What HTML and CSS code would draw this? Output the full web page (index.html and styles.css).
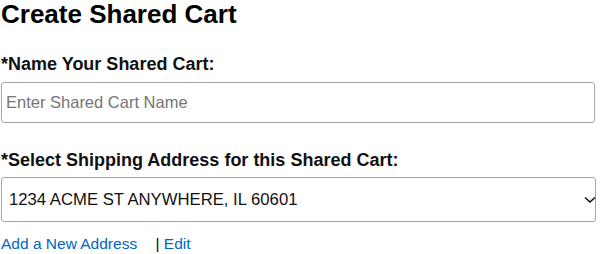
FILE: index.html
```html
<!DOCTYPE html>
<html lang="en">
<head>
  <meta charset="UTF-8" />
  <meta name="viewport" content="width=device-width, initial-scale=1.0"/>
  <title>Create Shared Cart</title>
  <link rel="stylesheet" href="styles.css">
</head>
<body>
  <div class="shared-cart">
    <h1>Create Shared Cart</h1>

    <label class="field-label" for="cartName">*Name Your Shared Cart:</label>
    <input class="text-input" id="cartName" type="text" placeholder="Enter Shared Cart Name">

    <label class="field-label" for="address">*Select Shipping Address for this Shared Cart:</label>
    <div class="select-wrap">
      <select class="select-input" id="address">
        <option>1234 ACME ST ANYWHERE, IL 60601</option>
      </select>
      <svg class="chevron" width="12" height="8" viewBox="0 0 12 8">
        <path d="M1 1.5 L6 6 L11 1.5" fill="none" stroke="#111" stroke-width="1.6"/>
      </svg>
    </div>

    <div class="address-links">
      <a href="#">Add a New Address</a>
      <span class="sep">|</span>
      <a href="#">Edit</a>
    </div>
  </div>
</body>
</html>
```

FILE: styles.css
```css
body {
  margin: 0;
  background: #fff;
  color: #111;
  font-family: "Liberation Sans", Arial, sans-serif;
}
.shared-cart {
  width: 594px;
  padding: 0 0 0 1px;
}
h1 {
  margin: 0;
  font-size: 26px;
  line-height: 29px;
  font-weight: bold;
  color: #000;
}
.field-label {
  display: block;
  font-size: 18px;
  font-weight: bold;
  line-height: 18px;
  margin-top: 26px;
  margin-bottom: 9px;
}
.text-input {
  display: block;
  box-sizing: border-box;
  width: 594px;
  height: 41px;
  margin: 0;
  padding: 0 4px;
  border: 1px solid #a6a6a6;
  border-radius: 3px;
  font-family: inherit;
  font-size: 16.5px;
  color: #111;
}
.text-input::placeholder {
  color: #757575;
}
.text-input + .field-label {
  margin-top: 28px;
  margin-bottom: 8px;
}
.select-wrap {
  position: relative;
  width: 595px;
}
.select-input {
  display: block;
  box-sizing: border-box;
  width: 595px;
  height: 45px;
  margin: 0;
  padding: 0 30px 0 7px;
  border: 1px solid #a6a6a6;
  border-radius: 3px;
  background: #fff;
  font-family: inherit;
  font-size: 16.7px;
  color: #111;
  appearance: none;
  -webkit-appearance: none;
}
.chevron {
  position: absolute;
  right: 0;
  top: 19px;
  pointer-events: none;
}
.address-links {
  margin-top: 13px;
  font-size: 15.5px;
  line-height: 18px;
}
.address-links a {
  color: #0066c0;
  text-decoration: none;
}
.sep {
  margin-left: 14px;
  color: #000;
}
```
